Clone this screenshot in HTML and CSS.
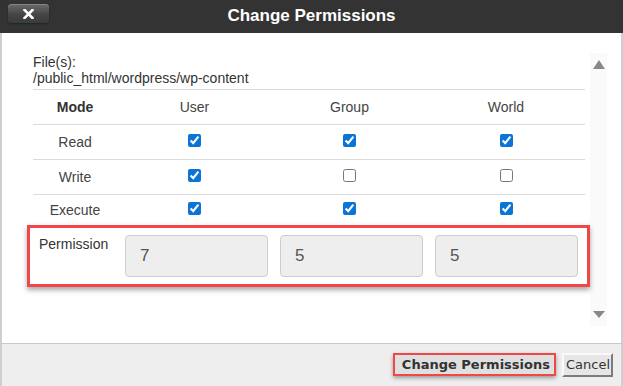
FILE: index.html
```html
<!DOCTYPE html>
<html>
<head>
<meta charset="utf-8">
<link rel="stylesheet" href="styles.css">
</head>
<body>
<div class="win">
  <div class="titlebar">
    <button class="close" aria-label="Close">
      <svg width="11" height="10" viewBox="0 0 11 10"><path d="M1.5 1 L9.5 9 M9.5 1 L1.5 9" stroke="#fff" stroke-width="2.6" stroke-linecap="square"/></svg>
    </button>
    <div class="title">Change Permissions</div>
    <div></div>
  </div>
  <div class="body">
    <div class="content">
      <div class="files">File(s):<br>/public_html/wordpress/wp-content</div>
      <div class="grid">
        <div class="row head"><div class="cell mode">Mode</div><div class="cell">User</div><div class="cell">Group</div><div class="cell">World</div></div>
        <div class="row"><div class="cell">Read</div><div class="cell"><input type="checkbox" checked></div><div class="cell"><input type="checkbox" checked></div><div class="cell"><input type="checkbox" checked></div></div>
        <div class="row"><div class="cell">Write</div><div class="cell"><input type="checkbox" checked></div><div class="cell"><input type="checkbox"></div><div class="cell"><input type="checkbox"></div></div>
        <div class="row last"><div class="cell">Execute</div><div class="cell"><input type="checkbox" checked></div><div class="cell"><input type="checkbox" checked></div><div class="cell"><input type="checkbox" checked></div></div>
      </div>
      <div class="perm">
        <div class="perm-label">Permission</div>
        <div class="perm-inputs">
          <input class="pval" value="7" readonly>
          <input class="pval" value="5" readonly>
          <input class="pval" value="5" readonly>
        </div>
      </div>
    </div>
    <div class="scroll"><span class="up"></span><span class="down"></span></div>
  </div>
  <div class="footer">
    <button class="btn primary">Change Permissions</button>
    <button class="btn cancel">Cancel</button>
  </div>
</div>
</body>
</html>
```
FILE: styles.css
```css
html, body {
  margin: 0;
  padding: 0;
  background: #fff;
}
.win {
  width: 623px;
  height: 386px;
  display: flex;
  flex-direction: column;
  font-family: "Liberation Sans", Arial, sans-serif;
  color: #333;
}
.titlebar {
  height: 33px;
  background: #333;
  display: grid;
  grid-template-columns: 1fr auto 1fr;
  align-items: center;
}
.close {
  justify-self: start;
  align-self: start;
  margin: 4px 0 0 8px;
  width: 41px;
  height: 19px;
  padding: 0;
  border: none;
  border-radius: 4px;
  background: linear-gradient(#6b6b6b, #454545 55%, #3b3b3b);
  box-shadow: 0 1px 2px #16262c, inset 0 1px 0 #858585;
  display: flex;
  align-items: center;
  justify-content: center;
}
.close svg { display: block; }
.title {
  color: #fff;
  font-weight: bold;
  font-size: 17px;
  letter-spacing: 0;
  padding-bottom: 2px;
}
.body {
  height: 310px;
  display: flex;
  border-left: 2px solid #cfcfcf;
  border-right: 2px solid #cfcfcf;
  background: #fff;
}
.content {
  flex: 1;
  padding: 21px 0 0 31px;
}
.files {
  font-size: 14px;
  line-height: 16px;
  color: #333;
}
.grid {
  margin-top: 3px;
  width: 552px;
}
.row {
  display: grid;
  grid-template-columns: 84px 155px 155px 158px;
  height: 34px;
  border-top: 1px solid #dcdcdc;
  font-size: 14px;
  color: #444;
}
.row.last { height: 30px; }
.cell {
  display: flex;
  align-items: center;
  justify-content: center;
  padding-bottom: 1px;
}
.mode { font-weight: bold; color: #333; }
.cell input[type=checkbox] {
  margin: 0 0 3px 0;
  width: 13px;
  height: 13px;
  accent-color: #0b74d6;
}
.perm {
  position: relative;
  z-index: 1;
  box-sizing: border-box;
  margin-left: -6px;
  width: 563px;
  height: 62px;
  border: 3px solid #f04848;
  box-shadow: 0 3px 5px rgba(0,0,0,0.35);
  display: flex;
  padding: 7px 9px;
  background: #fff;
}
.perm-label {
  width: 86px;
  font-size: 14px;
  line-height: 16px;
  padding-top: 1px;
  color: #333;
}
.perm-inputs {
  display: flex;
  gap: 12px;
}
.pval {
  box-sizing: border-box;
  width: 143px;
  height: 42px;
  border: 1px solid #cdcdcd;
  border-radius: 4px;
  background: #eee;
  padding: 0 14px;
  font-family: "Liberation Sans", Arial, sans-serif;
  font-size: 17px;
  color: #555;
  outline: none;
}
.scroll {
  width: 18px;
  margin: 20px 17px 17px 0;
  background: #fafafa;
  display: flex;
  flex-direction: column;
  justify-content: space-between;
  padding: 7px 2px 8px 3px;
  box-sizing: border-box;
}
.up {
  width: 0;
  height: 0;
  border-left: 6.5px solid transparent;
  border-right: 6.5px solid transparent;
  border-bottom: 9px solid #888;
}
.down {
  width: 0;
  height: 0;
  border-left: 6.5px solid transparent;
  border-right: 6.5px solid transparent;
  border-top: 7px solid #888;
}
.footer {
  flex: 1;
  border-top: 1px solid #c8c8c8;
  border-left: 2px solid #cfcfcf;
  border-right: 2px solid #cfcfcf;
  background: #eee;
  display: flex;
  justify-content: flex-end;
  align-items: flex-start;
  padding: 9px 8px 0 0;
}
.btn {
  font-family: "DejaVu Sans", Verdana, sans-serif;
  font-size: 13px;
  color: #333;
  height: 24px;
  box-sizing: border-box;
  margin: 0;
  line-height: 18px;
}
.primary {
  font-weight: bold;
  border: 2px solid #f04848;
  background: #e0e0e0;
  padding: 0 4px 0 7px;
  box-shadow: 0 2px 4px rgba(0,0,0,0.35);
  margin-right: 6px;
  height: 23px;
}
.cancel {
  border: 2px solid;
  border-color: #fafafa #7c7c7c #7c7c7c #fafafa;
  background: #e6e6e6;
  padding: 0 1px 0 2px;
}
```
